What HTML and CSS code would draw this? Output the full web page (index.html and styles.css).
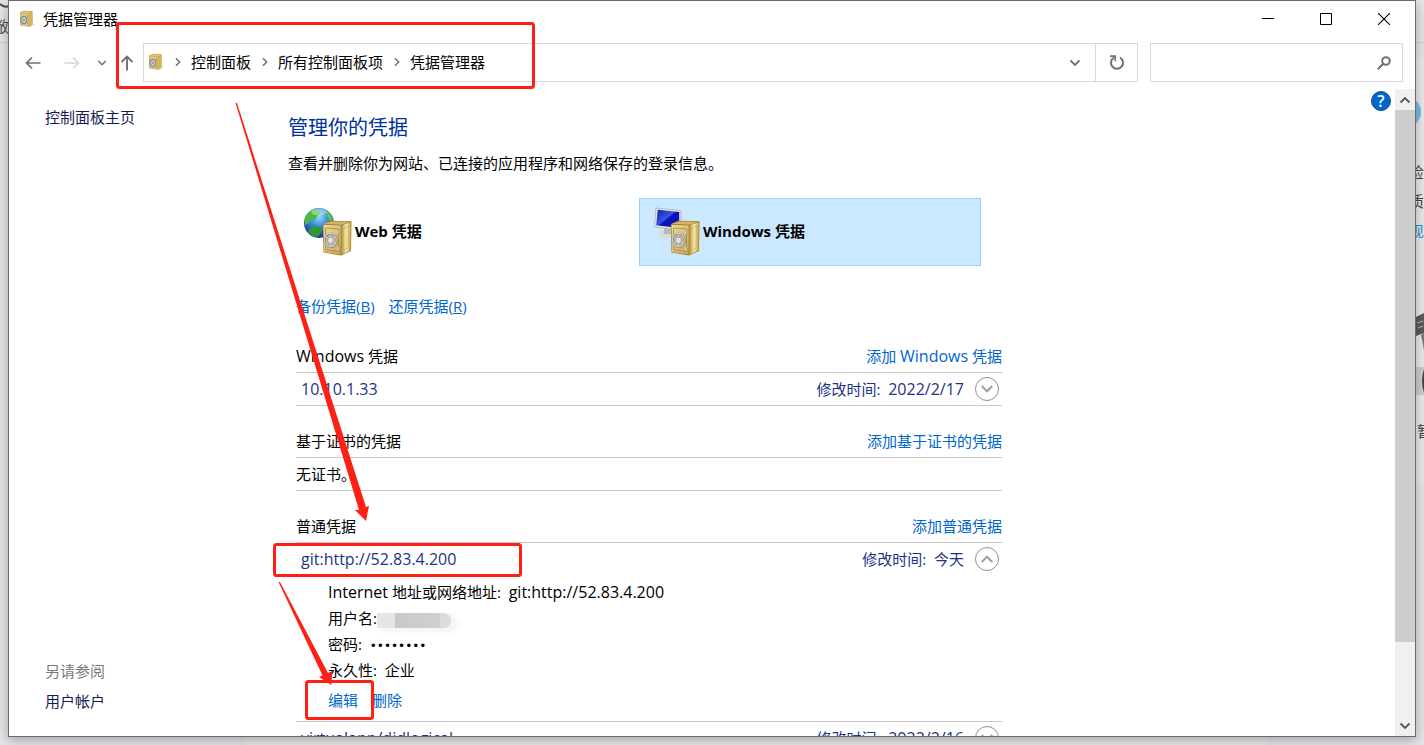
FILE: index.html
```html
<!DOCTYPE html>
<html lang="zh-CN">
<head>
    <meta charset="UTF-8">
    <meta name="viewport" content="width=device-width, initial-scale=1.0">
    <title>凭据管理器</title>
    <link rel="stylesheet" href="styles.css">
</head>
<body>
    <!-- Shared icons -->
    <svg class="defs" aria-hidden="true">
        <defs>
            <linearGradient id="gold" x1="0" y1="0" x2="1" y2="1">
                <stop offset="0" stop-color="#eddc9b"/>
                <stop offset="1" stop-color="#c9a851"/>
            </linearGradient>
            <linearGradient id="goldSide" x1="0" y1="0" x2="1" y2="0">
                <stop offset="0" stop-color="#b08c33"/>
                <stop offset="0.5" stop-color="#f4eab8"/>
                <stop offset="1" stop-color="#c4a245"/>
            </linearGradient>
            <radialGradient id="sea" cx="0.5" cy="0.3" r="0.7">
                <stop offset="0" stop-color="#8fdcff"/>
                <stop offset="0.5" stop-color="#2f83d6"/>
                <stop offset="1" stop-color="#12348f"/>
            </radialGradient>
            <linearGradient id="screen" x1="0" y1="0" x2="1" y2="1">
                <stop offset="0" stop-color="#0a1fb0"/>
                <stop offset="0.45" stop-color="#3a55e6"/>
                <stop offset="0.5" stop-color="#0a12b8"/>
                <stop offset="1" stop-color="#0818d0"/>
            </linearGradient>
        </defs>
        <symbol id="safe" viewBox="0 0 30 36">
            <path d="M.8 4 L8 .8 L29.5 1.2 L29 31 L19 35.5 L1.5 32.5 Z" fill="#a07e2b"/>
            <path d="M1.8 3.8 L9 1.4 L28.5 1.8 L19 4.8 Z" fill="#d3b566"/>
            <path d="M19.2 5.3 L28.9 2.2 L28.4 30.5 L19.2 34.8 Z" fill="url(#goldSide)"/>
            <path d="M22 8 L26.5 6.4 L26.2 28 L22 30.3 Z" fill="#ecdc9d" stroke="#c8a951" stroke-width=".6"/>
            <path d="M1.5 4.8 L18.6 5.6 L18.6 34.6 L2 32 Z" fill="url(#gold)"/>
            <path d="M3.5 8 L16.5 8.8 L16.5 31.5 L3.8 29.8 Z" fill="none" stroke="#a98735" stroke-width=".8"/>
            <path d="M16.300 10.500v4.500M16.300 27v4.500" stroke="#777" stroke-width="2"/>
            <path d="M16 10.500v4M16 27v4" stroke="#eee" stroke-width="1.200"/>
            <ellipse cx="8.6" cy="20.3" rx="5.9" ry="6.8" fill="#c9b67c" stroke="#767676" stroke-width="2.2"/>
            <ellipse cx="8.4" cy="20" rx="5.9" ry="6.8" fill="none" stroke="#d4d4d4" stroke-width="1.2"/>
            <path d="M8.500 13.500v13.500M3.300 17l10.400 6.500M3.300 23.500l10.400-6.500" stroke="#c2c2c2" stroke-width="1.300"/>
            <ellipse cx="8.5" cy="20.3" rx="2.9" ry="3.300" fill="#e2e2e2" stroke="#8a8a8a" stroke-width=".7"/>
        </symbol>
        <symbol id="safe-small" viewBox="0 0 16 18">
            <path d="M8 16.5 L12 17 L16 14 L13 14 Z" fill="#ddd"/>
            <path d="M1 2.5 L5 .8 L13.5 1 L13.7 14 L10 16.7 L1 15.2 Z" fill="#c09c45"/>
            <path d="M1.5 3 L5.2 1.2 L13 1.5 L10 3.4 Z" fill="#dfc67c"/>
            <path d="M10 3.7 L13.2 2 L13.3 13.6 L10 16 Z" fill="#d9b74d"/>
            <path d="M1.4 3.3 L9.5 3.8 L9.5 16 L1.4 14.8 Z" fill="#dcc78a"/>
            <ellipse cx="4.9" cy="10" rx="2.8" ry="3.6" fill="#ddd" stroke="#8c8c8c" stroke-width="1.3"/>
            <path d="M4.9 7.500v5M3 8.500l4 3M3 11.500l4-3" stroke="#8a8a8a" stroke-width=".6"/>
            <path d="M8.500 5.500v2M8.500 12.500v2" stroke="#999"/>
        </symbol>
        <symbol id="chevron" viewBox="0 0 12 12">
            <path d="M1.5 3.5 L6 8 L10.5 3.5" fill="none" stroke="currentColor" stroke-width="1.8"/>
        </symbol>
    </svg>

    <!-- Page behind the window -->
    <div class="backdrop" aria-hidden="true">
        <div class="backdrop-top"></div>
        <div class="backdrop-mid"></div>
        <span class="peek peek-left">敞</span>
        <svg class="peek peek-curve" width="9" height="10"><path d="M0 4q4 4 9 2" fill="none" stroke="#4b4860" stroke-width="2"/></svg>
        <div class="peek peek-card">
            <span class="peek-dot"></span>
            <span class="peek-a">检</span>
            <span class="peek-b">质</span>
            <span class="peek-c">现</span>
            <svg class="peek-art" width="8" height="100">
                <path d="M0 18 L8 14 V34 L0 37 Z" fill="#5b5b5b"/>
                <path d="M1 24l6-2M2 29l5-2" stroke="#bbb"/>
                <path d="M5 36q2 8 3 16V34z" fill="#777"/>
                <path d="M0 68h8v28H0z" fill="#cfcfcf"/>
                <path d="M8 70q-4 12 0 24z" fill="#444"/>
            </svg>
            <span class="peek-d">暂</span>
        </div>
    </div>

    <div class="window">
        <header class="titlebar">
            <svg class="app-icon"><use href="#safe-small"/></svg>
            <span class="title">凭据管理器</span>
            <div class="window-buttons">
                <button type="button" aria-label="最小化"><svg width="12" height="12"><path d="M0 5.5h12" stroke="#000"/></svg></button>
                <button type="button" aria-label="最大化"><svg width="12" height="12"><path d="M.5.5h11v11H.5z" fill="none" stroke="#000"/></svg></button>
                <button type="button" aria-label="关闭"><svg width="12" height="12"><path d="M0 0l12 12M12 0L0 12" stroke="#000" stroke-width="1.1"/></svg></button>
            </div>
        </header>

        <nav class="toolbar">
            <div class="history">
                <button type="button" class="nav-back" aria-label="后退"><svg width="16" height="14"><path d="M15.5 7H1.5M7 1.5L1.5 7 7 12.5" fill="none" stroke="currentColor" stroke-width="1.7"/></svg></button>
                <button type="button" class="nav-forward" aria-label="前进" disabled><svg width="16" height="14"><path d="M.5 7h14M9 1.5L14.5 7 9 12.5" fill="none" stroke="currentColor" stroke-width="1.7"/></svg></button>
                <button type="button" class="nav-recent" aria-label="最近浏览的位置"><svg width="10" height="10"><use href="#chevron"/></svg></button>
                <button type="button" class="nav-up" aria-label="上移"><svg width="14" height="16"><path d="M7 15.5V1.5M1.5 7L7 1.5 12.5 7" fill="none" stroke="currentColor" stroke-width="1.9"/></svg></button>
            </div>
            <div class="address">
                <div class="crumbs">
                    <svg class="app-icon"><use href="#safe-small"/></svg>
                    <svg class="sep"><use href="#chevron"/></svg>
                    <a href="#">控制面板</a>
                    <svg class="sep"><use href="#chevron"/></svg>
                    <a href="#">所有控制面板项</a>
                    <svg class="sep"><use href="#chevron"/></svg>
                    <a href="#">凭据管理器</a>
                </div>
                <button type="button" class="drop" aria-label="以前的位置"><svg width="12" height="12"><use href="#chevron"/></svg></button>
                <button type="button" class="refresh" aria-label="刷新">
                    <svg width="16" height="16"><path d="M11 2.5a6 6 0 1 1-6 0" fill="none" stroke="currentColor" stroke-width="2"/><path d="M1 1.2h5.2v5" fill="none" stroke="currentColor" stroke-width="1.7"/></svg>
                </button>
            </div>
            <div class="search">
                <input type="text" aria-label="搜索控制面板">
                <svg width="14" height="14"><circle cx="9" cy="5" r="3.8" fill="none" stroke="currentColor" stroke-width="2"/><path d="M6.3 7.7L.8 13.2" stroke="currentColor" stroke-width="2"/></svg>
            </div>
        </nav>

        <div class="content">
            <aside class="sidebar">
                <a href="#">控制面板主页</a>
                <div class="see-also">
                    <span>另请参阅</span>
                    <a href="#">用户帐户</a>
                </div>
            </aside>

            <main class="main">
                <h1>管理你的凭据</h1>
                <p class="intro">查看并删除你为网站、已连接的应用程序和网络保存的登录信息。</p>

                <div class="vaults">
                    <button type="button" class="vault">
                        <svg width="51" height="50" viewBox="0 0 51 50">
                            <circle cx="16" cy="16" r="15" fill="url(#sea)"/>
                            <path d="M3 9 Q8 2 14 1 L13 4 L18 6 L14 9 L12 13 L8 12 L5 17 L2 18 Q1 13 3 9Z" fill="#4db83a"/>
                            <path d="M5 25 Q8 18 14 19 L19 23 L17 28 L13 30 Q8 29 5 25Z" fill="#2f9a31"/>
                            <path d="M22 3 Q29 7 30 14 L26 13 L24 8Z" fill="#63c43c"/>
                            <ellipse cx="16" cy="5" rx="8" ry="3.5" fill="#fff" opacity=".35"/>
                            <use href="#safe" x="19" y="13" width="30" height="36"/>
                        </svg>
                        <span>Web 凭据</span>
                    </button>
                    <button type="button" class="vault selected">
                        <svg width="48" height="50" viewBox="1 0 48 50">
                            <ellipse cx="13" cy="27" rx="7.5" ry="4.5" fill="#d9dadc"/>
                            <path d="M11 19h7v8h-7z" fill="#b9babd"/>
                            <path d="M3 1 L28 3.5 L28 23 L1.400 20 Z" fill="#e4e4e0" stroke="#aaa" stroke-width=".7"/>
                            <path d="M4.8 2.7 L26.2 5 L26.2 21 L3.2 18.3 Z" fill="url(#screen)"/>
                            <use href="#safe" x="17" y="13" width="30" height="36"/>
                        </svg>
                        <span>Windows 凭据</span>
                    </button>
                </div>

                <div class="list">
                    <div class="links">
                        <a href="#">备份凭据(<u>B</u>)</a>
                        <a href="#">还原凭据(<u>R</u>)</a>
                    </div>

                    <section>
                        <div class="group-head"><h2><span class="latin">Windows</span> 凭据</h2><a href="#">添加 <span class="latin">Windows</span> 凭据</a></div>
                        <div class="row line">
                            <span class="name latin">10.10.1.33</span>
                            <span>修改时间:&nbsp; <span class="latin">2022/2/17</span></span>
                            <button type="button" class="toggle" aria-label="展开"><svg><use href="#chevron"/></svg></button>
                        </div>
                    </section>

                    <section>
                        <div class="group-head"><h2>基于证书的凭据</h2><a href="#">添加基于证书的凭据</a></div>
                        <div class="row line empty">无证书。</div>
                    </section>

                    <section>
                        <div class="group-head"><h2>普通凭据</h2><a href="#">添加普通凭据</a></div>
                        <div class="row">
                            <span class="name latin">git:http://52.83.4.200</span>
                            <span>修改时间:&nbsp; 今天</span>
                            <button type="button" class="toggle open" aria-label="折叠"><svg><use href="#chevron"/></svg></button>
                        </div>
                        <div class="details line">
                            <p><span class="latin">Internet</span> 地址或网络地址:&nbsp; <span class="latin">git:http://52.83.4.200</span></p>
                            <p class="user">用户名:<span class="mask"></span></p>
                            <p>密码:&nbsp; <span class="dots">••••••••</span></p>
                            <p>永久性:&nbsp; 企业</p>
                            <div class="actions">
                                <a href="#">编辑</a>
                                <a href="#">删除</a>
                            </div>
                        </div>
                        <div class="row">
                            <span class="name latin">virtualapp/didlogical</span>
                            <span>修改时间:&nbsp; <span class="latin">2022/2/16</span></span>
                            <button type="button" class="toggle" aria-label="展开"><svg><use href="#chevron"/></svg></button>
                        </div>
                    </section>
                </div>
            </main>

            <button type="button" class="help" aria-label="帮助">?</button>

            <div class="scrollbar">
                <button type="button" class="up" aria-label="向上滚动"><svg width="12" height="12"><use href="#chevron"/></svg></button>
                <div class="track"><div class="thumb"></div></div>
                <button type="button" aria-label="向下滚动"><svg width="12" height="12"><use href="#chevron"/></svg></button>
            </div>
        </div>
    </div>

    <!-- Red marks drawn over the window -->
    <svg class="marks" aria-hidden="true">
        <rect x="117.5" y="23.5" width="416" height="64" rx="2"/>
        <rect x="274.5" y="544.5" width="246" height="31" rx="2"/>
        <rect x="306.5" y="681.5" width="66" height="37" rx="2"/>
        <path d="M235.5 103 L237 103 L366 507 L369 506 L366 521 L355 510 L359 510 Z"/>
        <path d="M278.5 582 L280 582 L328 673 L332 671 L331.5 685 L319 677 L322.5 675.5 Z"/>
    </svg>
</body>
</html>
```
FILE: styles.css
```css
* {
    box-sizing: border-box;
}
body {
    margin: 0;
    height: 100vh;
    overflow: hidden;
    position: relative;
    display: flex;
    background: #e4e4e5;
    color: #000;
    font-family: 'Open Sans', 'Noto Sans CJK SC', sans-serif;
    font-size: 15px;
    line-height: 20px;
}
h1, h2, p {
    margin: 0;
    font-weight: normal;
}
a {
    color: #0066cc;
    text-decoration: none;
}
button {
    padding: 0;
    border: none;
    background: none;
    color: inherit;
    font: inherit;
    display: flex;
    align-items: center;
    justify-content: center;
}
svg {
    flex: none;
}
.defs {
    position: absolute;
    width: 0;
    height: 0;
}
.latin {
    font-size: 16px;
}

/* page behind the window */
.backdrop {
    position: absolute;
    inset: 0;
    overflow: hidden;
    background: #e4e6ea;
}
.backdrop-top {
    height: 43px;
    background: #e6e6e6;
    border-bottom: 1px solid #d2d2d4;
}
.backdrop-mid {
    position: absolute;
    top: 57px;
    bottom: 0;
    left: 246px;
    right: 158px;
    background: #eaeaea;
}
.peek {
    position: absolute;
    color: #55555f;
}
.peek-left {
    left: -6px;
    top: 16px;
}
.peek-curve {
    left: 0;
    top: 0;
}
.peek-card {
    top: 57px;
    right: 0;
    width: 8px;
    height: 428px;
    overflow: hidden;
    background: #ececec;
}
.peek-card > * {
    position: absolute;
    left: -7px;
    color: #444;
}
.peek-card .peek-dot {
    top: 41px;
    left: -20px;
    width: 25px;
    height: 28px;
    border-radius: 50%;
    background: #7cc0e4;
}
.peek-card .peek-a {
    top: 105px;
}
.peek-card .peek-b {
    top: 134px;
}
.peek-card .peek-c {
    top: 164px;
    color: #2f8fd0;
}
.peek-card .peek-art {
    top: 242px;
    left: 0;
}
.peek-card .peek-d {
    top: 364px;
    left: 1px;
}

/* window */
.window {
    position: relative;
    flex: 1;
    min-width: 0;
    margin: 0 8px 8px;
    display: flex;
    flex-direction: column;
    background: #fff;
    border: 1px solid #6b6b6b;
    box-shadow: 0 3px 12px rgba(0, 0, 0, 0.3);
}
.titlebar {
    height: 36px;
    display: flex;
    align-items: center;
    padding: 0 2px 0 10px;
}
.app-icon {
    width: 16px;
    height: 18px;
}
.title {
    flex: 1;
    margin-left: 8px;
}
.window-buttons {
    display: flex;
    height: 36px;
}
.window-buttons button {
    width: 58px;
}
.toolbar {
    display: flex;
    align-items: center;
    height: 52px;
    padding: 0 12px 1px 16px;
    color: #707070;
}
.history {
    display: flex;
    align-items: center;
    width: 118px;
}
.nav-forward {
    margin-left: 23px;
    color: #d8d8d8;
}
.nav-recent {
    margin-left: 17px;
}
.nav-up {
    margin-left: 13px;
}
.address {
    flex: 1;
    display: flex;
    height: 39px;
    border: 1px solid #d9d9d9;
}
.crumbs {
    flex: 1;
    display: flex;
    align-items: center;
    padding: 0 0 2px 4px;
}
.crumbs a {
    color: #000;
}
.sep {
    width: 10px;
    height: 10px;
    margin: 0 8px 0 9px;
    transform: rotate(-90deg);
}
.drop {
    width: 40px;
}
.refresh {
    width: 42px;
    border-left: 1px solid #d9d9d9;
}
.search {
    display: flex;
    align-items: center;
    width: 253px;
    height: 39px;
    margin-left: 12px;
    padding-right: 11px;
    border: 1px solid #d9d9d9;
}
.search input {
    flex: 1;
    min-width: 0;
    height: 30px;
    padding: 0 8px;
    border: none;
    outline: none;
    font: inherit;
}

.content {
    flex: 1;
    min-height: 0;
    display: flex;
    overflow: hidden;
}
.sidebar {
    width: 279px;
    padding: 18px 0 25px 36px;
    display: flex;
    flex-direction: column;
    justify-content: space-between;
}
.sidebar a {
    color: #151c55;
}
.see-also {
    display: flex;
    flex-direction: column;
    gap: 10px;
    color: #7a7a7a;
}
.main {
    flex: 0 1 714px;
    padding-top: 26px;
}
h1 {
    font-size: 20px;
    line-height: 26px;
    color: #003399;
}
.intro {
    margin-top: 12px;
}
.vaults {
    display: grid;
    grid-template-columns: 1fr 1fr;
    gap: 9px;
    margin: 25px 21px 30px 0;
}
.vault {
    height: 68px;
    padding-left: 14px;
    gap: 1px;
    justify-content: flex-start;
    border: 1px solid transparent;
    font-weight: bold;
}
.vault span {
    padding-bottom: 2px;
}
.vault.selected {
    background: #cce8ff;
    border-color: #99d1ff;
}
.list {
    margin-left: 8px;
}
.links, .actions {
    display: flex;
    gap: 14px;
}
.links {
    margin-bottom: 5px;
}
.group-head {
    display: flex;
    justify-content: space-between;
    height: 52px;
    padding-top: 20px;
    line-height: 31px;
    border-bottom: 1px solid #c8c8c8;
}
h2 {
    font-size: 15px;
}
.row {
    display: flex;
    align-items: center;
    height: 32px;
    padding: 0 3px 0 5px;
    color: #1e3287;
}
.line {
    border-bottom: 1px solid #c8c8c8;
}
.row.line {
    height: 33px;
}
.row.empty {
    padding-left: 0;
    color: #000;
}
.name {
    flex: 1;
}
.toggle {
    width: 24px;
    height: 24px;
    margin-left: 11px;
    border: 1px solid #909090;
    border-radius: 50%;
    color: #a0a0a0;
}
.toggle svg {
    width: 14px;
    height: 14px;
}
.toggle.open svg, .up svg {
    transform: rotate(180deg);
}
.details {
    padding: 4px 0 8px 32px;
    line-height: 26px;
}
.details p {
    height: 26px;
}
.actions {
    height: 26px;
    margin-top: 4px;
}
.user {
    display: flex;
    align-items: center;
}
.mask {
    width: 74px;
    height: 15px;
    margin-top: 4px;
    border-radius: 0 7px 7px 0;
    background: linear-gradient(90deg, #e6e6e2 18px, #c9c9cb 18px, #cdcdcf 48px, #d0d0d2 63px, #dcdcde 63px);
    box-shadow: 6px 3px 4px 2px #f6f6f6;
}
.dots {
    font-family: 'DejaVu Sans', sans-serif;
    font-size: 12px;
    line-height: 12px;
}
.help {
    width: 20px;
    height: 20px;
    margin: 2px 4px 0 auto;
    border: 1px solid #164f8c;
    border-radius: 50%;
    background: #0067cc;
    color: #fff;
    font-size: 16px;
    font-weight: 600;
}
.scrollbar {
    width: 20px;
    display: flex;
    flex-direction: column;
    background: #f0f0f0;
    color: #555;
}
.scrollbar button {
    height: 21px;
    width: 20px;
}
.track {
    flex: 1;
}
.thumb {
    height: 88%;
    background: #cdcdcd;
}

.marks {
    position: absolute;
    left: 0;
    top: 0;
    width: 100%;
    height: 100%;
    pointer-events: none;
}
.marks rect {
    fill: none;
    stroke: #ff2015;
    stroke-width: 3;
}
.marks path {
    fill: #ff2015;
}
```
